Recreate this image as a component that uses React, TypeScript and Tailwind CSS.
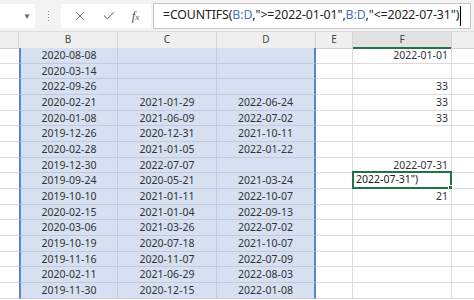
import { X, Check } from "lucide-react";

const colB = [
  "2020-08-08", "2020-03-14", "2022-09-26", "2020-02-21", "2020-01-08", "2019-12-26", "2020-02-28", "2019-12-30",
  "2019-09-24", "2019-10-10", "2020-02-15", "2020-03-06", "2019-10-19", "2019-11-16", "2020-02-11", "2019-11-30",
];
const colC = [
  "", "", "", "2021-01-29", "2021-06-09", "2020-12-31", "2021-01-05", "2022-07-07",
  "2020-05-21", "2021-01-11", "2021-01-04", "2021-03-26", "2020-07-18", "2020-11-07", "2021-06-29", "2020-12-15",
];
const colD = [
  "", "", "", "2022-06-24", "2022-07-02", "2021-10-11", "2022-01-22", "",
  "2021-03-24", "2022-10-07", "2022-09-13", "2022-07-02", "2021-10-07", "2022-07-09", "2022-08-03", "2022-01-08",
];
const colF = ["2022-01-01", "", "33", "33", "33", "", "", "2022-07-31", "", "21", "", "", "", "", "", ""];

const ACTIVE = 8;

const FormulaBar = () => (
  <div className="h-[32px] bg-[#f3f3f3] flex items-center border-b border-[#dadada]">
    <div className="w-[35px] h-[24px] bg-white flex items-center justify-end pr-[4px]">
      <span className="text-[8px] text-[#666]">▼</span>
    </div>
    <div className="w-[26px] flex justify-center">
      <div className="flex flex-col gap-[2px]">
        <span className="w-[1px] h-[1px] bg-[#999]" />
        <span className="w-[1px] h-[1px] bg-[#999]" />
        <span className="w-[1px] h-[1px] bg-[#999]" />
        <span className="w-[1px] h-[1px] bg-[#999]" />
      </div>
    </div>
    <div className="w-[90px] h-[24px] bg-white flex items-center justify-around px-[4px] text-[#555]">
      <X size={14} strokeWidth={1.4} />
      <Check size={14} strokeWidth={1.6} />
      <span className="font-['Liberation_Serif',serif] italic text-[13px] leading-none">
        f<span className="text-[9px]">x</span>
      </span>
    </div>
    <div className="ml-[2px] w-[318px] h-[26px] bg-white border border-[#c6c6c6] flex items-center pl-[9px] text-[12.3px] tracking-[-0.1px] text-[#222] whitespace-nowrap overflow-hidden">
      <span>=COUNTIFS(</span>
      <span className="text-[#4673c4]">B:D</span>
      <span>,"&gt;=2022-01-01",</span>
      <span className="text-[#4673c4]">B:D</span>
      <span>,"&lt;=2022-07-31")</span>
      <span className="ml-[1px] w-[1px] h-[20px] bg-black" />
    </div>
  </div>
);

const gridCols = "grid grid-cols-[19px_99px_99px_99px_37px_99px_1fr]";

const Header = () => (
  <div className={`${gridCols} h-[16px] bg-[#efefef] text-[10px] text-[#444] leading-[15px]`}>
    <div className="border-r border-b border-[#d4d4d4]" />
    <div className="border-r border-b border-[#d4d4d4] text-center">B</div>
    <div className="border-r border-b border-[#d4d4d4] text-center">C</div>
    <div className="border-r border-b border-[#d4d4d4] text-center">D</div>
    <div className="border-r border-b border-[#d4d4d4] text-center">E</div>
    <div className="border-r border-b-2 border-b-[#217346] border-r-[#d4d4d4] bg-[#e2e2e2] text-center">F</div>
    <div className="border-b border-[#d4d4d4]" />
  </div>
);

export default function App() {
  return (
    <div className="w-[474px] h-[300px] overflow-hidden bg-white font-['Noto_Sans',sans-serif]">
      <FormulaBar />
      <Header />
      <div className="text-[10.5px] text-[#333]">
        {colB.map((b, i) => (
          <div key={i} className={`${gridCols} h-[15.67px] leading-[14.5px]`}>
            <div className="border-b border-[#dadada]" />
            <div className="bg-[#d6e0f1] border-l-2 border-l-[#5a86c8] border-r border-b border-r-[#c2cbdc] border-b-[#c2cbdc] text-center">
              {b}
            </div>
            <div className="bg-[#d6e0f1] border-r border-b border-[#c2cbdc] text-center">{colC[i]}</div>
            <div className="bg-[#d6e0f1] border-r-2 border-r-[#5a86c8] border-b border-b-[#c2cbdc] text-center">
              {colD[i]}
            </div>
            <div className="border-r border-b border-[#dadada]" />
            {i === ACTIVE ? (
              <div className="relative border-r border-b border-[#dadada]">
                <div className="absolute -left-[1px] -top-[2px] w-[100px] h-[18px] border-2 border-[#217346] bg-white pl-[2px] leading-[13px] text-[#222]">
                  2022-07-31")
                  <span className="absolute -right-[3px] -bottom-[3px] w-[5px] h-[5px] bg-[#217346] border border-white" />
                </div>
              </div>
            ) : (
              <div className="border-r border-b border-[#dadada] text-right pr-[3px]">{colF[i]}</div>
            )}
            <div className="border-b border-[#dadada]" />
          </div>
        ))}
      </div>
    </div>
  );
}
